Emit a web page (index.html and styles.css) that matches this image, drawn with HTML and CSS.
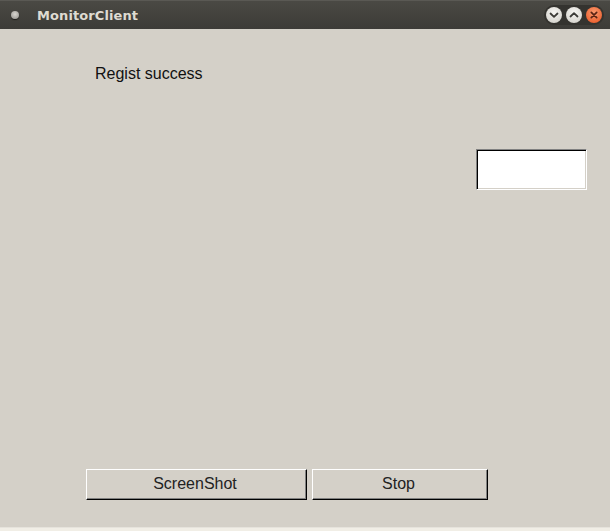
FILE: index.html
```html
<!DOCTYPE html>
<html>
<head>
<meta charset="utf-8">
<link rel="stylesheet" href="styles.css">
</head>
<body>
<div class="window">
  <div class="titlebar">
    <span class="app-icon"></span>
    <span class="title">MonitorClient</span>
    <div class="controls">
      <span class="ctl ctl-min">
        <svg viewBox="0 0 16 16" width="16" height="16"><path d="M4.5 6.5 L8 9.8 L11.5 6.5" fill="none" stroke="#3c3b37" stroke-width="1.8" stroke-linecap="round" stroke-linejoin="round"/></svg>
      </span>
      <span class="ctl ctl-max">
        <svg viewBox="0 0 16 16" width="16" height="16"><path d="M4.5 9.5 L8 6.2 L11.5 9.5" fill="none" stroke="#3c3b37" stroke-width="1.8" stroke-linecap="round" stroke-linejoin="round"/></svg>
      </span>
      <span class="ctl ctl-close">
        <svg viewBox="0 0 16 16" width="16" height="16"><path d="M5.3 5.3 L10.7 10.7 M10.7 5.3 L5.3 10.7" fill="none" stroke="#5a2414" stroke-width="1.7" stroke-linecap="round"/></svg>
      </span>
    </div>
  </div>
  <div class="content">
    <div class="label">Regist success</div>
    <div class="input-row">
      <div class="textbox"></div>
    </div>
    <div class="spacer"></div>
    <div class="buttons">
      <button class="btn btn-shot">ScreenShot</button>
      <button class="btn btn-stop">Stop</button>
    </div>
  </div>
  <div class="bottom"></div>
</div>
</body>
</html>
```
FILE: styles.css
```css
html, body {
  margin: 0;
  padding: 0;
  width: 610px;
  height: 531px;
  overflow: hidden;
  background: #d4d0c8;
}
.window {
  width: 610px;
  height: 531px;
  display: flex;
  flex-direction: column;
  background: #d4d0c8;
}
.titlebar {
  height: 29px;
  flex: none;
  display: flex;
  align-items: center;
  background: linear-gradient(#4a4944, #3c3b37);
  border-top: 1px solid #5a5954;
  box-sizing: border-box;
}
.app-icon {
  width: 8px;
  height: 8px;
  border-radius: 50%;
  background: radial-gradient(circle at 50% 40%, #d8d6d0, #8f8d88);
  box-shadow: 0 1px 1px #1d1c1a;
  margin-left: 11px;
  margin-right: 18px;
}
.title {
  font-family: "DejaVu Sans", sans-serif;
  font-weight: bold;
  font-size: 13px;
  color: #dfdbd2;
  letter-spacing: 0.1px;
}
.controls {
  margin-left: auto;
  margin-right: 6px;
  display: flex;
  gap: 4px;
  padding: 2px 2px;
  border-radius: 11px;
  background: #34332f;
}
.ctl {
  width: 16px;
  height: 16px;
  border-radius: 50%;
  display: flex;
  background: radial-gradient(circle at 50% 35%, #f6f5f2, #cfcdc6);
}
.ctl-close {
  background: radial-gradient(circle at 50% 35%, #fa9a6f, #e8521f);
}
.content {
  flex: 1;
  display: flex;
  flex-direction: column;
}
.label {
  font-family: "Liberation Sans", Arial, sans-serif;
  font-size: 16px;
  line-height: 18px;
  color: #111;
  margin-top: 36px;
  margin-left: 95px;
}
.input-row {
  display: flex;
  justify-content: flex-end;
  margin-top: 66px;
  padding-right: 23px;
}
.textbox {
  width: 109px;
  height: 39px;
  background: #fff;
  border: 1px solid;
  border-color: #808080 #fff #fff #808080;
  box-shadow: inset 1px 1px 0 #000, inset -1px -1px 0 #d4d0c8;
}
.spacer {
  flex: 1;
}
.buttons {
  display: flex;
  gap: 5px;
  margin-left: 86px;
  margin-bottom: 27px;
}
.btn {
  height: 31px;
  margin: 0;
  padding: 0 3px 2px 0;
  background: #d4d0c8;
  border: 1px solid;
  border-color: #fff #000 #000 #fff;
  box-shadow: inset -1px -1px 0 #808080;
  font-family: "Liberation Sans", Arial, sans-serif;
  font-size: 16px;
  color: #222;
  text-align: center;
}
.btn-shot {
  width: 221px;
}
.btn-stop {
  width: 176px;
}
.bottom {
  height: 3px;
  flex: none;
  background: #f1eee6;
  border-top: 1px solid #e6e3dc;
}
```
